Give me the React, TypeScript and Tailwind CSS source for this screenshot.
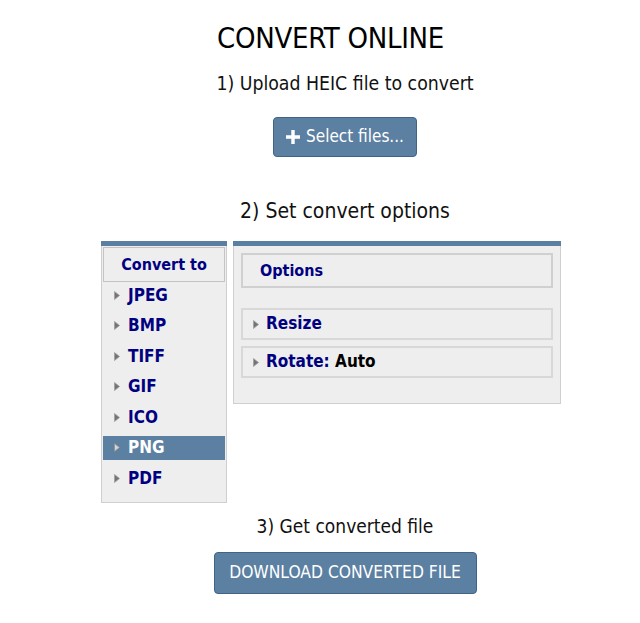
const FONT = "font-['DejaVu_Sans_Condensed','DejaVu_Sans',sans-serif]";

const formats = ['JPEG', 'BMP', 'TIFF', 'GIF', 'ICO', 'PNG', 'PDF'];

function Arrow({ light }: { light?: boolean }) {
  return (
    <svg width="6" height="9" viewBox="0 0 6 9" className="shrink-0">
      <path
        d="M0.5 0.5 L5.5 4.5 L0.5 8.5 Z"
        fill={light ? '#d4d4d4' : '#747474'}
        stroke={light ? '#8f8f8f' : '#a0a0a0'}
        strokeWidth="0.8"
      />
    </svg>
  );
}

export default function App() {
  const selected = 'PNG';

  return (
    <div className={`${FONT} w-[640px] h-[623px] bg-white text-black`}>
      <div className="ml-[50px] w-[590px] flex flex-col items-center">
        <h1 className="mt-[22px] mr-[29px] text-[29px] leading-[32px] tracking-[-0.3px]">CONVERT ONLINE</h1>
        <p className="mt-[18px] text-[19.3px] leading-[24px] text-[#111]">1) Upload HEIC file to convert</p>

        <button className="mt-[21px] w-[144px] h-[40px] rounded-[4px] bg-[#5b80a2] border border-[#3f6486] text-white text-[17px] flex items-center justify-center gap-[6px]">
          <svg width="14" height="14" viewBox="0 0 14 14">
            <path d="M5.3 0 H8.7 V5.3 H14 V8.7 H8.7 V14 H5.3 V8.7 H0 V5.3 H5.3 Z" fill="white" />
          </svg>
          <span>Select files...</span>
        </button>

        <p className="mt-[42px] text-[21px] leading-[24px] text-[#111]">2) Set convert options</p>
      </div>

      <div className="mt-[18px] ml-[101px] flex gap-[6px] items-start">
        {/* format list */}
        <div className="w-[126px]">
          <div className="h-[5px] bg-[#5a7fa0]" />
          <div className="h-[257px] bg-[#eeeeee] border border-t-0 border-[#cfcfcf] px-px pt-px">
            <div className="h-[35px] border border-[#c4c4c4] flex items-center justify-center font-bold text-[16px] text-[#000080]">
              Convert to
            </div>
            <div className="flex flex-col">
              {formats.map((f, i) => (
                <div
                  key={f}
                  className={`h-[24.5px] flex items-center gap-[8px] pl-[11px] font-bold text-[17px] ${
                    i === 0 ? 'mt-[1px]' : 'mt-[6px]'
                  } ${f === selected ? 'bg-[#5b80a2] text-white' : 'text-[#000080]'}`}
                >
                  <Arrow light={f === selected} />
                  <span>{f}</span>
                </div>
              ))}
            </div>
          </div>
        </div>

        {/* options */}
        <div className="w-[328px]">
          <div className="h-[5px] bg-[#5a7fa0]" />
          <div className="h-[158px] bg-[#eeeeee] border border-t-0 border-[#cfcfcf] px-[7px] pt-[7px]">
            <div className="h-[35px] border-2 border-[#d0d0d0] flex items-center pl-[17px] font-bold text-[16px] text-[#000080]">
              Options
            </div>
            <div className="mt-[20px] h-[32px] border-2 border-[#d8d8d8] flex items-center gap-[7px] pl-[10px] font-bold text-[17px] text-[#000080]">
              <Arrow />
              <span>Resize</span>
            </div>
            <div className="mt-[6px] h-[32px] border-2 border-[#d8d8d8] flex items-center gap-[7px] pl-[10px] font-bold text-[17px] text-[#000080]">
              <Arrow />
              <span>
                Rotate: <span className="text-black">Auto</span>
              </span>
            </div>
          </div>
        </div>
      </div>

      <div className="ml-[50px] w-[590px] flex flex-col items-center">
        <p className="mt-[11px] text-[19px] leading-[24px] text-[#111]">3) Get converted file</p>

        <button className="mt-[14px] w-[263px] h-[42px] rounded-[4px] bg-[#5b80a2] border border-[#3f6486] text-white text-[17.3px] flex items-center justify-center">
          DOWNLOAD CONVERTED FILE
        </button>
      </div>
    </div>
  );
}
